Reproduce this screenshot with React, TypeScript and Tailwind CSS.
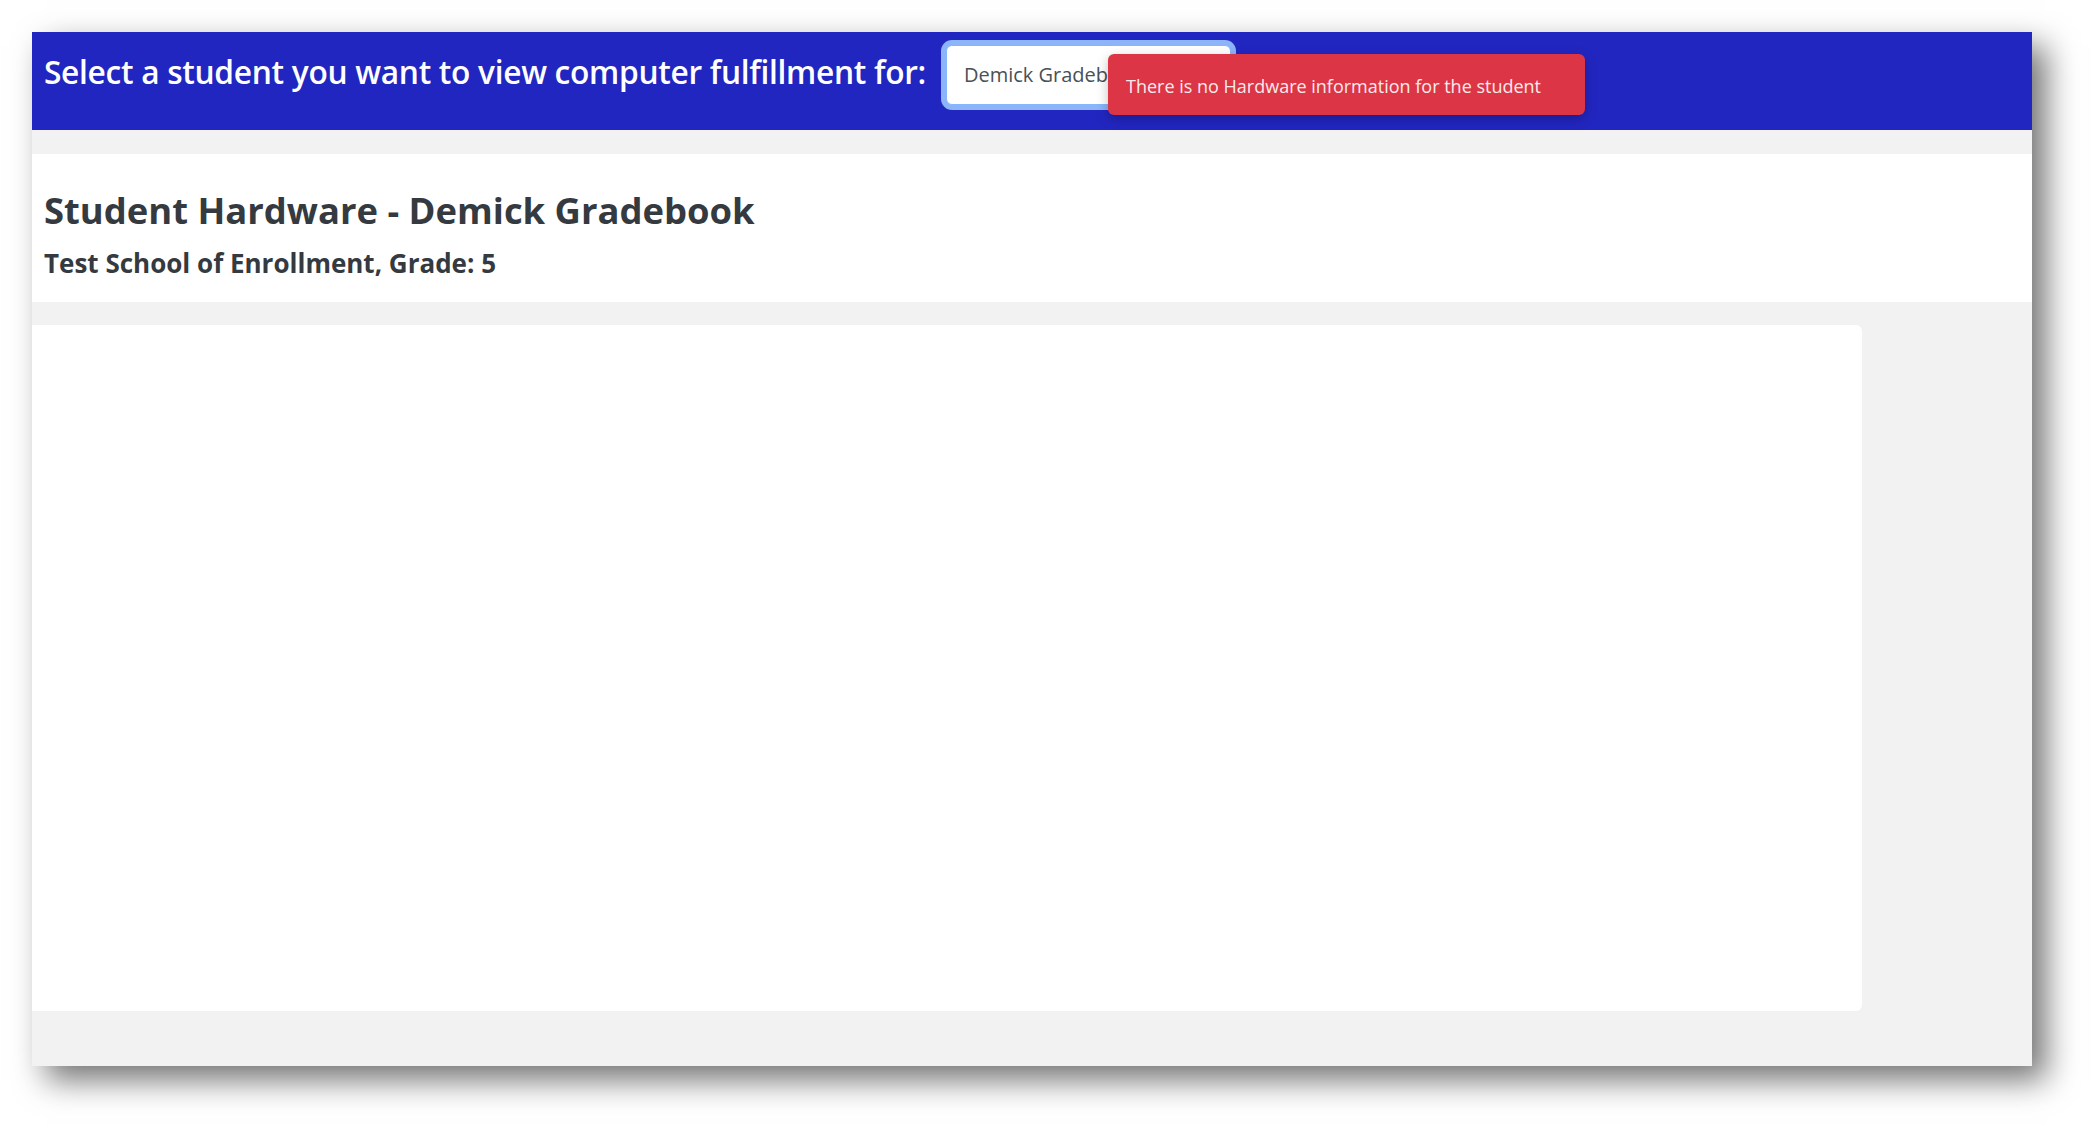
export default function App() {
  return (
    <div className="min-h-screen bg-white p-8" style={{ fontFamily: '"Open Sans", "Noto Sans", sans-serif' }}>
      <div className="flex h-[1034px] w-[2000px] flex-col bg-[#f2f2f2] shadow-[14px_14px_30px_rgba(0,0,0,0.55)]">
        <header className="relative flex h-[98px] shrink-0 items-start gap-5 bg-[#2226c0] px-3 pt-[13px]">
          <h2 className="mt-[11px] text-[31.7px] font-semibold leading-[32px] tracking-[-0.3px] text-white">
            Select a student you want to view computer fulfillment for:
          </h2>
          <div className="flex h-[60px] w-[285px] items-center rounded-md border border-[#86b7fe] bg-white px-[17px] text-[20px] text-[#495057] ring-[5px] ring-[#8cb4f8]">
            Demick Gradebook
          </div>
          <div className="absolute left-[1076px] top-[22px] flex h-[61px] w-[477px] items-center rounded-md bg-[#dc3545] px-[18px] pt-[3px] text-[18px] text-[#fbeaec] shadow-[0_4px_12px_rgba(0,0,0,0.25)]">
            There is no Hardware information for the student
          </div>
        </header>

        <section className="mt-6 h-[148px] shrink-0 bg-white px-3 pt-[38px] text-[#343a40]">
          <h1 className="text-[36.4px] font-bold leading-[36px]">Student Hardware - Demick Gradebook</h1>
          <h3 className="mt-[22px] text-[26px] font-bold leading-[26px]">Test School of Enrollment, Grade: 5</h3>
        </section>

        <div className="mt-[23px] h-[686px] w-[1830px] rounded-r-md bg-white" />
      </div>
    </div>
  );
}
